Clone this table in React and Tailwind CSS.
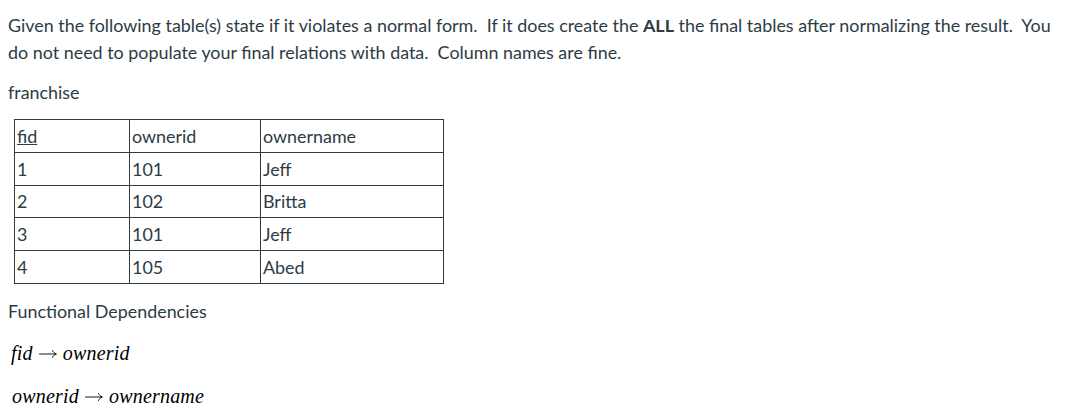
function Arrow() {
  return (
    <svg width="18" height="10" viewBox="0 0 18 10" className="inline-block mx-[6px] align-[1px]" fill="none" stroke="black" strokeWidth="0.9" strokeLinecap="round">
      <path d="M0.5 5 H17" />
      <path d="M13.5 1.5 C14.3 3.3 15.6 4.4 17.3 5 C15.6 5.6 14.3 6.7 13.5 8.5" />
    </svg>
  );
}

export default function App() {
  const rows = [
    ["1", "101", "Jeff"],
    ["2", "102", "Britta"],
    ["3", "101", "Jeff"],
    ["4", "105", "Abed"],
  ];
  const cell = "border border-[#2d3b45] px-[2px] py-0 h-[32.8px] leading-[24px] text-left font-normal align-middle";
  const math = { fontFamily: "'Liberation Serif', 'DejaVu Serif', serif" };
  return (
    <div className="bg-white w-[1069px] h-[417px] overflow-hidden pl-[8px] pt-[12px] text-[#2d3b45] text-[17.9px] leading-[27px]" style={{ fontFamily: "Lato, 'Liberation Sans', sans-serif" }}>
      <p>
        Given the following table(s) state if it violates a normal form.&nbsp; If it does create the <strong className="font-bold">ALL</strong> the final tables after normalizing the result.&nbsp; You do not need to populate your final relations with data.&nbsp; Column names are fine.
      </p>
      <p className="mt-[13px]">franchise</p>
      <table className="mt-[13px] ml-[6px] border-collapse w-[430px]">
        <thead>
          <tr>
            <th className={`${cell} w-[115px]`}><span className="underline">fid</span></th>
            <th className={`${cell} w-[131px]`}>ownerid</th>
            <th className={cell}>ownername</th>
          </tr>
        </thead>
        <tbody>
          {rows.map((r, i) => (
            <tr key={i}>
              {r.map((c, j) => (
                <td key={j} className={cell}>{c}</td>
              ))}
            </tr>
          ))}
        </tbody>
      </table>
      <p className="mt-[14px]">Functional Dependencies</p>
      <p className="mt-[14px] ml-[3px] text-black italic text-[20px] leading-[28px] tracking-[0.2px]" style={math}>
        <span>fid</span><Arrow /><span>ownerid</span>
      </p>
      <p className="mt-[15px] ml-[4px] text-black italic text-[20px] leading-[28px] tracking-[0.2px]" style={math}>
        <span>ownerid</span><Arrow /><span>ownername</span>
      </p>
    </div>
  );
}
